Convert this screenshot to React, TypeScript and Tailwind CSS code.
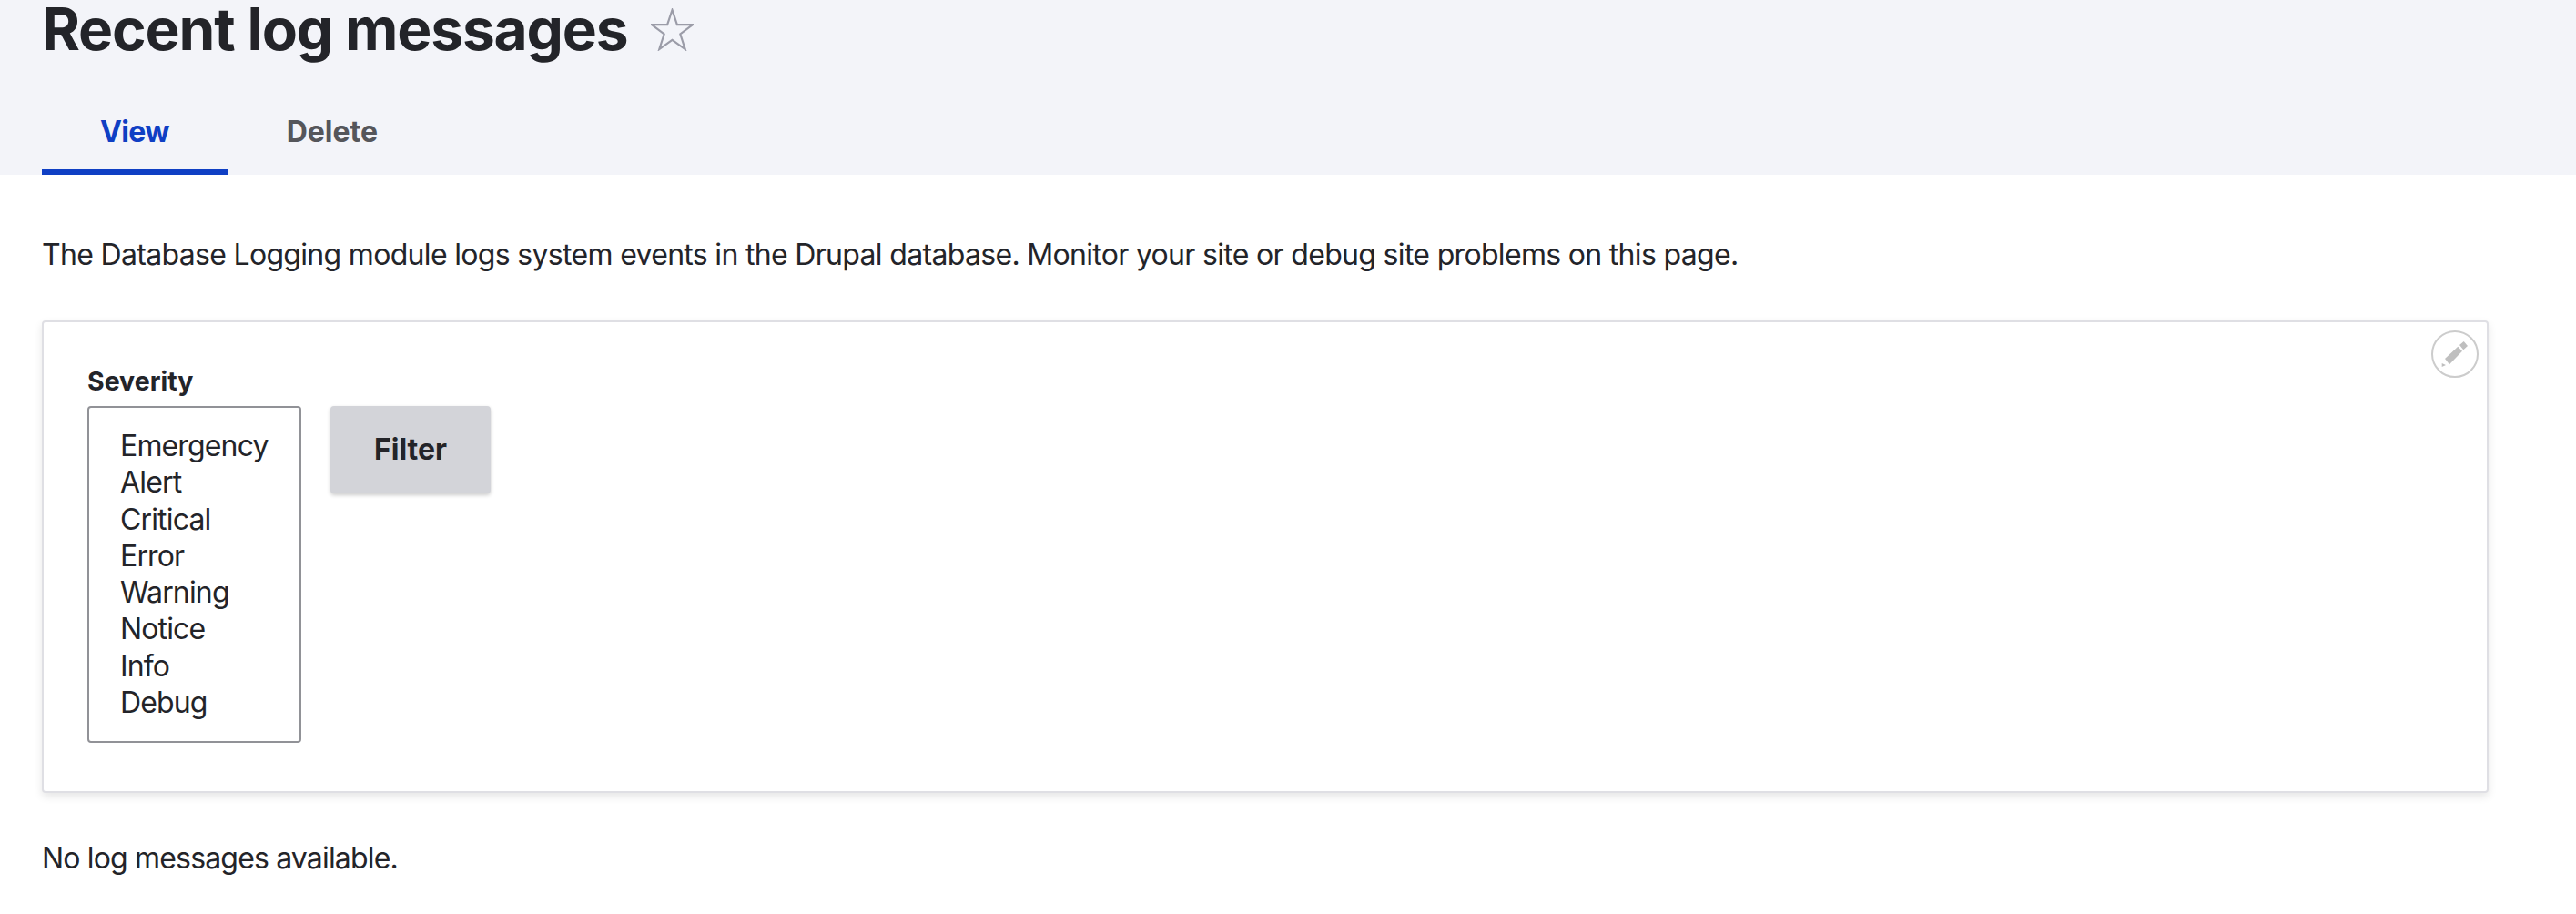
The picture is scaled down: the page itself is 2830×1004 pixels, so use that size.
const severities = ["Emergency", "Alert", "Critical", "Error", "Warning", "Notice", "Info", "Debug"];

function StarIcon() {
  return (
    <svg className="ml-[25px] mt-[1px] h-[47px] w-[47px]" viewBox="0 0 48 48">
      <path
        d="M24 2 L29.5 18.5 L47 18.5 L33 29 L38.5 46 L24 35.5 L9.5 46 L15 29 L1 18.5 L18.5 18.5 Z"
        fill="none"
        stroke="#9b9ca8"
        strokeWidth="2.2"
      />
    </svg>
  );
}

function PencilButton() {
  return (
    <svg className="absolute right-[9px] top-[9px] h-[52px] w-[52px]" viewBox="0 0 52 52">
      <circle cx="26" cy="26" r="25" fill="#fff" stroke="#cccccc" strokeWidth="2" />
      <path d="M31 16 L35.7 12 L40 17 L35.3 21.3 Z" fill="#bfbfbf" />
      <path d="M15 31 L29.3 17.7 L34 22.7 L20 37.3 Z" fill="#bfbfbf" />
      <path d="M11.7 40 L11.7 36 L16 38 Z" fill="#bfbfbf" />
    </svg>
  );
}

export default function App() {
  return (
    <div className="min-h-[1004px] bg-white font-['Inter',sans-serif] text-[32px] tracking-[-0.68px] text-[#232429]">
      <div className="h-[192px] bg-[#f3f4f9] pl-[46px]">
        <div className="flex h-[64px] items-center">
          <h1 className="text-[64px] font-bold leading-[64px] tracking-[-1.16px]">Recent log messages</h1>
          <StarIcon />
        </div>
        <div className="mt-[32px] flex">
          <div className="flex h-[96px] items-center border-b-[6px] border-[#0f3fc4] px-[64px] pt-[8px] font-bold leading-[32px] text-[#0f3fc4]">
            View
          </div>
          <div className="flex h-[96px] items-center px-[65px] pt-[2px] font-bold leading-[32px] tracking-normal text-[#55565b]">
            Delete
          </div>
        </div>
      </div>

      <div className="pl-[46px] pr-[96px]">
        <p className="pt-[68px] leading-[40px]">
          The Database Logging module logs system events in the Drupal database. Monitor your site or debug site problems on this page.
        </p>

        <div className="relative mt-[52px] h-[519px] rounded-[4px] border-2 border-[#dfdfe4] bg-white pl-[48px] pt-[47px] shadow-[0_4px_10px_rgba(0,0,0,0.1)]">
          <PencilButton />
          <div className="text-[28.5px] font-bold leading-[36px] tracking-normal">Severity</div>
          <div className="mt-[9px] flex items-start gap-[32px]">
            <div className="h-[370px] w-[235px] rounded-[4px] border-2 border-[#919297] pl-[34px] pt-[22px] leading-[40.3px] tracking-[-0.85px]">
              {severities.map((severity) => (
                <div key={severity}>{severity}</div>
              ))}
            </div>
            <button className="h-[96px] w-[176px] rounded-[4px] bg-[#d3d4d9] font-bold tracking-normal shadow-[0_2px_4px_rgba(0,0,0,0.2)]">
              Filter
            </button>
          </div>
        </div>

        <p className="mt-[52px] leading-[40px] tracking-[-0.83px]">No log messages available.</p>
      </div>
    </div>
  );
}
